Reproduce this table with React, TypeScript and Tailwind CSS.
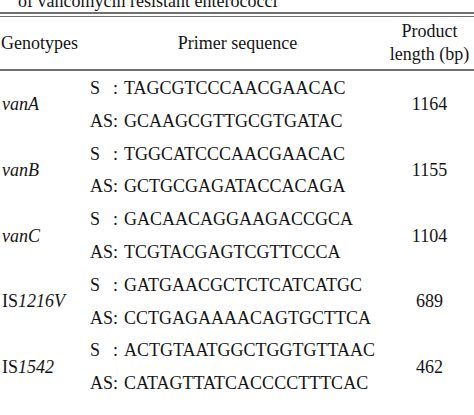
const rows = [
  { pre: '', name: 'vanA', s: 'TAGCGTCCCAACGAACAC', as: 'GCAAGCGTTGCGTGATAC', len: '1164' },
  { pre: '', name: 'vanB', s: 'TGGCATCCCAACGAACAC', as: 'GCTGCGAGATACCACAGA', len: '1155' },
  { pre: '', name: 'vanC', s: 'GACAACAGGAAGACCGCA', as: 'TCGTACGAGTCGTTCCCA', len: '1104' },
  { pre: 'IS', name: '1216V', s: 'GATGAACGCTCTCATCATGC', as: 'CCTGAGAAAACAGTGCTTCA', len: '689' },
  { pre: 'IS', name: '1542', s: 'ACTGTAATGGCTGGTGTTAAC', as: 'CATAGTTATCACCCCTTTCAC', len: '462' },
]

export default function App() {
  return (
    <div
      className="h-[415px] w-[474px] overflow-hidden bg-white text-[18px] text-[#141414]"
      style={{ fontFamily: '"Liberation Serif"' }}
    >
      <p className="mt-[-8px] whitespace-nowrap pl-[18px] leading-[18px]">of vancomycin resistant enterococci</p>

      <div className="mt-[2px] h-[2px] bg-[#707070]" />
      <div className="mt-[1.5px] h-[1.5px] bg-[#707070]" />

      <div className="grid h-[52px] grid-cols-[90px_1fr_89px] items-center">
        <div className="pl-px">Genotypes</div>
        <div className="text-center">Primer sequence</div>
        <div className="text-center leading-[23px]">
          <div>Product</div>
          <div className="whitespace-nowrap">length (bp)</div>
        </div>
      </div>

      <div className="h-[2px] bg-[#707070]" />

      <div className="pt-px">
        {rows.map((r) => (
          <div key={r.name} className="grid grid-cols-[90px_1fr_89px] items-center leading-[32.8px]">
            <div className="pl-[2px]">
              {r.pre}
              <i>{r.name}</i>
            </div>
            <div className="grid grid-cols-[34px_auto] whitespace-nowrap">
              <div>
                <span className="inline-block w-[23px]">S</span>:
              </div>
              <div>{r.s}</div>
              <div>AS:</div>
              <div>{r.as}</div>
            </div>
            <div className="text-center">{r.len}</div>
          </div>
        ))}
      </div>
    </div>
  )
}
